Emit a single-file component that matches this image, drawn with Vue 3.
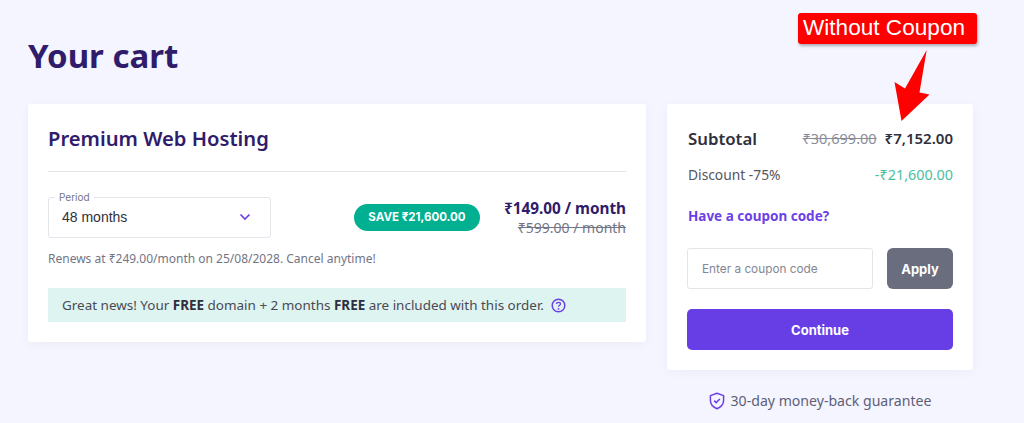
<template>
  <div class="page">
    <h1 class="title">Your cart</h1>
    <div class="columns">
      <section class="card plan">
        <h2 class="plan-name">Premium Web Hosting</h2>
        <div class="plan-row">
          <div class="period">
            <span class="period-label">Period</span>
            <span class="period-value">48 months</span>
            <svg class="chevron" width="12" height="8" viewBox="0 0 12 8" fill="none">
              <path d="M1.500 1.500 6 6l4.500-4.500" stroke="#6d3fe6" stroke-width="1.700" />
            </svg>
          </div>
          <span class="save">SAVE ₹21,600.00</span>
          <div class="price">
            <div class="price-now">₹149.00 / month</div>
            <div class="price-old">₹599.00 / month</div>
          </div>
        </div>
        <p class="renews">Renews at ₹249.00/month on 25/08/2028. Cancel anytime!</p>
        <div class="news">
          <span>Great news! Your <b>FREE</b> domain + 2 months <b>FREE</b> are included with this order.</span>
          <svg width="15" height="15" viewBox="0 0 15 15" fill="none">
            <circle cx="7.500" cy="7.500" r="6.300" stroke="#6d3fe6" stroke-width="1.500" />
            <path d="M5.500 6c0-1 .8-1.700 2-1.700s2 .7 2 1.600c0 1.400-2 1.400-2 2.800" stroke="#6d3fe6" stroke-width="1.300" />
            <circle cx="7.500" cy="10.900" r=".9" fill="#6d3fe6" />
          </svg>
        </div>
      </section>

      <div class="side">
        <section class="card summary">
          <div class="subtotal">
            <span class="subtotal-label">Subtotal</span>
            <span class="subtotal-prices">
              <s>₹30,699.00</s>
              <b>₹7,152.00</b>
            </span>
          </div>
          <div class="discount">
            <span>Discount -75%</span>
            <span class="discount-value">-₹21,600.00</span>
          </div>
          <a class="coupon-link">Have a coupon code?</a>
          <div class="coupon">
            <div class="coupon-input">Enter a coupon code</div>
            <button class="apply">Apply</button>
          </div>
          <button class="continue">Continue</button>
        </section>
        <div class="guarantee">
          <svg width="16" height="18" viewBox="0 0 16 18" fill="none">
            <path d="M8 1.200 14.600 3.600v4.600c0 3.900-2.700 6.900-6.600 8.500-3.900-1.600-6.600-4.600-6.600-8.500V3.600L8 1.200Z" stroke="#6d3fe6" stroke-width="1.500" stroke-linejoin="round" />
            <path d="m5.200 8.600 2 2 3.600-3.600" stroke="#6d3fe6" stroke-width="1.500" />
          </svg>
          <span>30-day money-back guarantee</span>
        </div>
      </div>
    </div>

    <div class="note">Without Coupon</div>
    <svg class="arrow" width="40" height="76" viewBox="0 0 40 76">
      <path d="M36.700 4 29.500 46.500 39.500 48.500 11.500 75 4.500 36 15 42.500Z" fill="#fe0000" />
    </svg>
  </div>
</template>

<script setup>
</script>

<style>
body {
  margin: 0;
  background: #f4f5ff;
}
</style>

<style scoped>
.page {
  position: relative;
  width: 1024px;
  height: 423px;
  overflow: hidden;
  box-sizing: border-box;
  padding: 36px 50px 0 28px;
  font-family: Inter, "Noto Sans", sans-serif;
  color: #2f1c6a;
}

.title {
  margin: 0 0 28px;
  font-size: 33px;
  line-height: 40px;
  font-weight: 700;
  font-family: "Noto Sans", sans-serif;
}

.columns {
  display: flex;
  align-items: flex-start;
  gap: 21px;
}

.card {
  background: #fff;
  border-radius: 3px;
  box-shadow: 0 2px 12px rgba(29, 30, 32, 0.04);
  box-sizing: border-box;
}

.plan {
  width: 618px;
  height: 238px;
  padding: 21px 20px 0;
}

.plan-name {
  margin: 0;
  padding-bottom: 19px;
  border-bottom: 1px solid #e4e5ea;
  font-family: "Noto Sans", sans-serif;
  font-size: 20.200px;
  line-height: 27px;
  font-weight: 600;
}

.plan-row {
  display: flex;
  align-items: center;
  margin-top: 25px;
}

.period {
  position: relative;
  display: flex;
  align-items: center;
  justify-content: space-between;
  width: 223px;
  height: 41px;
  box-sizing: border-box;
  padding: 0 19px 2px 13px;
  border: 1px solid #e4e5ea;
  border-radius: 3px;
}

.period-label {
  position: absolute;
  top: -6px;
  left: 6px;
  padding: 0 4px;
  background: #fff;
  font-size: 10px;
  line-height: 11px;
  color: #727586;
}

.period-value {
  font-family: "Liberation Sans", sans-serif;
  font-size: 14px;
  color: #2f2f3d;
}

.save {
  margin-left: 83px;
  width: 126px;
  height: 27px;
  border-radius: 14px;
  background: #00b090;
  color: #fff;
  font-size: 11.500px;
  font-weight: 700;
  line-height: 27px;
  text-align: center;
}

.price {
  margin-left: auto;
  text-align: right;
  font-family: "Noto Sans", sans-serif;
}

.price-now {
  font-size: 15.300px;
  line-height: 20px;
  font-weight: 700;
}

.price-old {
  font-size: 14px;
  line-height: 20px;
  color: #727586;
  text-decoration: line-through;
}

.renews {
  margin: 13px 0 0;
  font-family: "Noto Sans", sans-serif;
  font-size: 12px;
  line-height: 16px;
  color: #727586;
}

.news {
  display: flex;
  align-items: center;
  gap: 7px;
  height: 34px;
  margin-top: 21px;
  padding-left: 14px;
  background: #def4f0;
  font-family: "Noto Sans", sans-serif;
  font-size: 13.460px;
  color: #4a4a55;
}

.news b {
  color: #2f2f3d;
}

.side {
  width: 306px;
}

.summary {
  display: flex;
  flex-direction: column;
  height: 266px;
  padding: 24px 20px 0;
}

.subtotal,
.discount {
  display: flex;
  align-items: center;
  justify-content: space-between;
  padding-left: 1px;
  font-family: "Noto Sans", sans-serif;
}

.subtotal {
  height: 20px;
  color: #2f2f3d;
}

.subtotal-label {
  font-size: 16.800px;
  font-weight: 600;
}

.subtotal-prices {
  display: flex;
  gap: 8px;
  font-size: 14.500px;
}

.subtotal-prices s {
  color: #8a8c99;
}

.subtotal-prices b {
  font-weight: 600;
  font-size: 15px;
}

.discount {
  margin-top: 16px;
  height: 20px;
  font-size: 13.800px;
  color: #55555f;
}

.discount-value {
  font-size: 14.400px;
  color: #4cbf9f;
}

.coupon-link {
  margin-top: 23px;
  padding-left: 1px;
  font-family: "Noto Sans", sans-serif;
  font-size: 13.500px;
  line-height: 18px;
  font-weight: 700;
  color: #6d3fe6;
}

.coupon {
  display: flex;
  justify-content: space-between;
  margin-top: 23px;
}

.coupon-input {
  width: 186px;
  height: 41px;
  box-sizing: border-box;
  padding-left: 14px;
  border: 1px solid #e4e5ea;
  border-radius: 3px;
  font-size: 11.800px;
  line-height: 41px;
  color: #838694;
}

button {
  border: 0;
  color: #fff;
  font-family: Inter, sans-serif;
  font-weight: 700;
  font-size: 13px;
  padding: 0;
}

.apply {
  width: 66px;
  height: 41px;
  border-radius: 6px;
  background: #6a6d7e;
}

.continue {
  height: 41px;
  margin-top: 20px;
  border-radius: 5px;
  background: #673de6;
}

.guarantee {
  display: flex;
  align-items: center;
  justify-content: center;
  gap: 6px;
  margin-top: 22px;
  font-family: "Noto Sans", sans-serif;
  font-size: 14.100px;
  line-height: 18px;
  color: #5e6078;
}

.note {
  position: absolute;
  top: 13px;
  left: 798px;
  width: 179px;
  height: 31px;
  box-sizing: border-box;
  padding-left: 5px;
  border-radius: 3px;
  background: #fe0000;
  box-shadow: 1px 2px 3px rgba(0, 0, 0, 0.3);
  color: #fff;
  font-family: "Liberation Sans", sans-serif;
  font-size: 22.600px;
  line-height: 29px;
}

.arrow {
  position: absolute;
  top: 46px;
  left: 890px;
}
</style>
